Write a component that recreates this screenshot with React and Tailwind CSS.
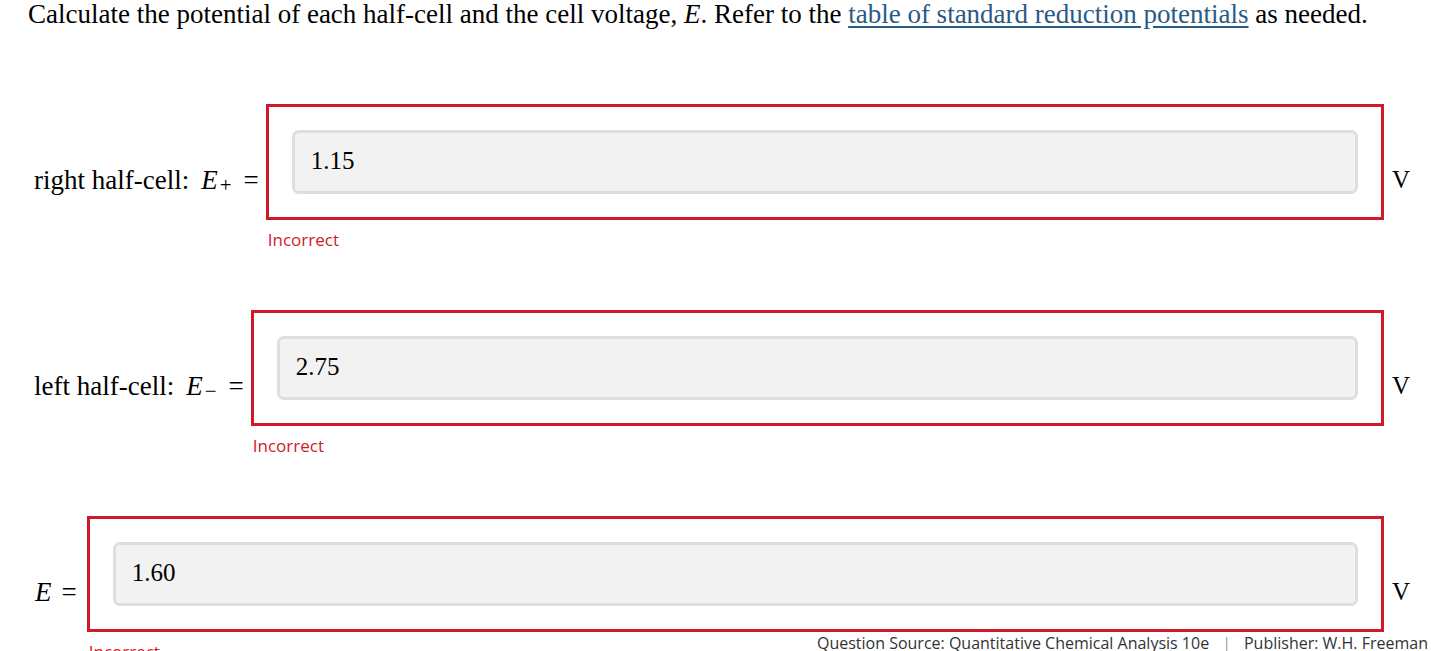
export default function App() {
  const rows = [
    { label: "right half-cell:", sub: "+", value: "1.15" },
    { label: "left half-cell:", sub: "−", value: "2.75" },
    { label: "", sub: "", value: "1.60" },
  ];

  return (
    <div className="min-h-screen bg-white text-black font-['Liberation_Serif',serif]">
      <p className="pl-[28px] text-[27px] leading-[28px] whitespace-nowrap">
        Calculate the potential of each half-cell and the cell voltage, <i>E</i>. Refer to the{" "}
        <a href="#" className="text-[#2a5a86] underline underline-offset-[3px]">
          table of standard reduction potentials
        </a>{" "}
        as needed.
      </p>

      <div className="mt-[76px] flex flex-col gap-[60px]">
        {rows.map((r) => (
          <div key={r.value} className="flex items-start pl-[34px] pr-[21px]">
            <div className="pt-[63px] pr-[7px] text-[27px] leading-[27px] whitespace-nowrap flex items-baseline">
              {r.label && <span className="mr-[11px]">{r.label}</span>}
              <i className="ml-[1px]">E</i>
              {r.sub && (
                <span className="ml-[2px] text-[21px] leading-[21px] relative top-[3px]">{r.sub}</span>
              )}
              <span className={r.sub ? "ml-[12px]" : "ml-[10px] mr-[3px]"}>=</span>
            </div>
            <div className="flex-1 flex flex-col">
              <div className="border-[3px] border-[#d01a29] p-[23px]">
                <div className="h-[64px] rounded-[7px] border-[3px] border-[#dedede] bg-[#f2f2f2] pl-[16px] pt-[15px] text-[25px] leading-[25px]">
                  {r.value}
                </div>
              </div>
              <div className="pl-[2px] pt-[10px] font-['Open_Sans',sans-serif] text-[17px] leading-[20px] text-[#d01a29]">
                Incorrect
              </div>
            </div>
            <div className="pt-[63px] pl-[8px] w-[26px] text-[25px] leading-[25px]">V</div>
          </div>
        ))}
      </div>

      <div className="fixed bottom-0 right-0 bg-white pl-[6px] pr-[3px] h-[16px] overflow-hidden font-['Open_Sans',sans-serif] text-[16px] leading-[16px] text-[#333]">
        Question Source: Quantitative Chemical Analysis 10e
        <span className="mx-[13px] text-[#999]">|</span>
        Publisher: W.H. Freeman
      </div>
    </div>
  );
}
